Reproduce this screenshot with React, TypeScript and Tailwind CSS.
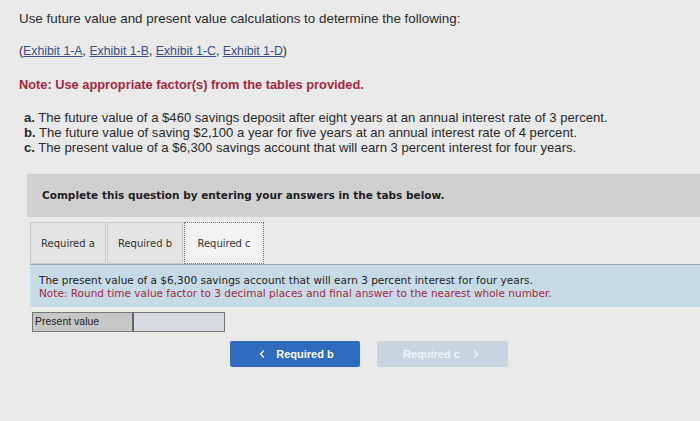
import { ChevronLeft, ChevronRight } from 'lucide-react'

const sans = { fontFamily: '"Liberation Sans", Arial, sans-serif' }
const verdana = { fontFamily: '"DejaVu Sans", Verdana, sans-serif' }

function Tab({ label, active }: { label: string; active?: boolean }) {
  return (
    <div
      className={
        active
          ? 'flex h-[42px] w-[80px] items-center justify-center border border-dotted border-[#777] bg-[#f2f2f2] text-[10px] text-[#333]'
          : 'flex h-[42px] w-[76px] items-center justify-center border border-[#c9c9c9] bg-[#e3e3e3] text-[10px] text-[#333]'
      }
    >
      {label}
    </div>
  )
}

export default function App() {
  return (
    <div className="h-[421px] w-[700px] overflow-hidden bg-[#e9e9e9] text-[#2b2b2b]" style={sans}>
      <div className="pl-[19px] pt-[10px]">
        <p className="text-[13.4px] leading-[18px]">
          Use future value and present value calculations to determine the following:
        </p>
        <p className="mt-[14px] text-[12.3px] leading-[18px]">
          (
          <span className="text-[#3a4f8a] underline">Exhibit 1-A</span>,{' '}
          <span className="text-[#3a4f8a] underline">Exhibit 1-B</span>,{' '}
          <span className="text-[#3a4f8a] underline">Exhibit 1-C</span>,{' '}
          <span className="text-[#3a4f8a] underline">Exhibit 1-D</span>)
        </p>
        <p className="mt-[16px] text-[12.8px] font-bold leading-[18px] text-[#a3283f]">
          Note: Use appropriate factor(s) from the tables provided.
        </p>
        <ul className="mt-[16px] pl-[5px] text-[13.1px] leading-[15px]">
          <li>
            <b>a.</b> The future value of a $460 savings deposit after eight years at an annual interest rate of 3 percent.
          </li>
          <li>
            <b>b.</b> The future value of saving $2,100 a year for five years at an annual interest rate of 4 percent.
          </li>
          <li>
            <b>c.</b> The present value of a $6,300 savings account that will earn 3 percent interest for four years.
          </li>
        </ul>
      </div>

      <div className="ml-[27px] mt-[19px] flex h-[43px] items-center bg-[#d0d0d0] pl-[15px]" style={verdana}>
        <span className="text-[10.5px] font-bold text-[#222]">
          Complete this question by entering your answers in the tabs below.
        </span>
      </div>

      <div className="ml-[30px] mt-[5px] flex gap-[1px]" style={verdana}>
        <Tab label="Required a" />
        <Tab label="Required b" />
        <Tab label="Required c" active />
      </div>

      <div className="ml-[30px] h-[43px] border-t border-[#9aa7b0] bg-[#c6dbe6] pl-[9px] pt-[9px] text-[10.5px] leading-[13px]" style={verdana}>
        <p className="text-[#222]">
          The present value of a $6,300 savings account that will earn 3 percent interest for four years.
        </p>
        <p className="text-[#a3283f]">
          Note: Round time value factor to 3 decimal places and final answer to the nearest whole number.
        </p>
      </div>

      <div className="ml-[32px] mt-[5px] flex h-[20px] w-[193px] border border-[#777] text-[10.5px]" style={sans}>
        <div className="flex w-[99px] items-center bg-[#c6c6c6] pl-[2px] text-[#222]">Present value</div>
        <div className="flex-1 border-l-2 border-[#666] bg-[#d6d9de]" />
      </div>

      <div className="mt-[9px] flex gap-[17px] pl-[230px]" style={sans}>
        <div className="flex h-[26px] w-[130px] items-center justify-center gap-[8px] rounded-[2px] bg-[#2f6cbd] text-[11px] font-bold text-white">
          <ChevronLeft size={12} strokeWidth={2.5} />
          Required b
        </div>
        <div className="flex h-[26px] w-[131px] items-center justify-center gap-[10px] rounded-[2px] bg-[#c8d5e0] text-[11px] font-bold text-[#eef2f6]">
          Required c
          <ChevronRight size={12} strokeWidth={2.5} />
        </div>
      </div>
    </div>
  )
}
